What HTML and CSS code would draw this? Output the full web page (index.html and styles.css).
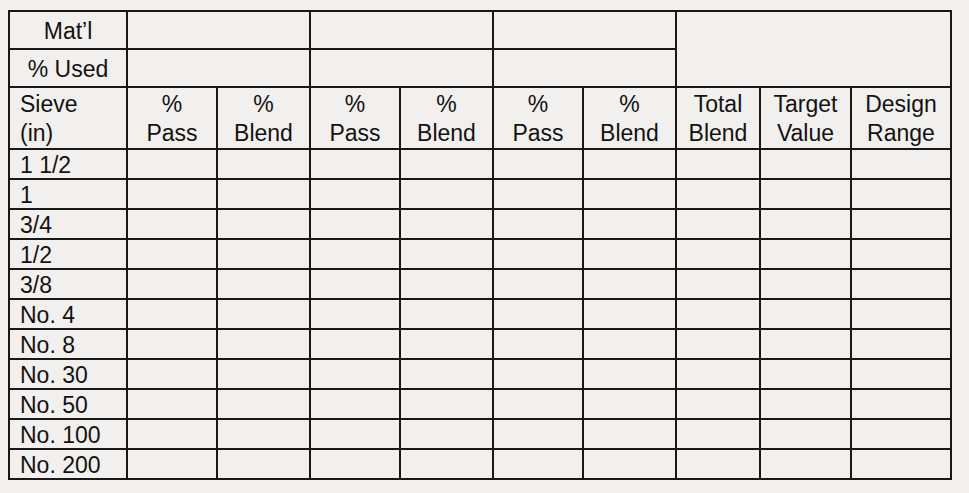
FILE: index.html
```html
<!DOCTYPE html>
<html lang="en">
<head>
<meta charset="utf-8">
<title>Aggregate Blend Worksheet</title>
<link rel="stylesheet" href="styles.css">
</head>
<body>
<div class="sheet">
  <div class="cell center">Mat’l</div>
  <div class="cell span2"></div>
  <div class="cell span2"></div>
  <div class="cell span2"></div>
  <div class="cell corner"></div>

  <div class="cell center">% Used</div>
  <div class="cell span2"></div>
  <div class="cell span2"></div>
  <div class="cell span2"></div>

  <div class="cell head left">Sieve<br>(in)</div>
  <div class="cell head">%<br>Pass</div>
  <div class="cell head">%<br>Blend</div>
  <div class="cell head">%<br>Pass</div>
  <div class="cell head">%<br>Blend</div>
  <div class="cell head">%<br>Pass</div>
  <div class="cell head">%<br>Blend</div>
  <div class="cell head">Total<br>Blend</div>
  <div class="cell head">Target<br>Value</div>
  <div class="cell head">Design<br>Range</div>

  <div class="cell label">1 1/2</div><div class="cell"></div><div class="cell"></div><div class="cell"></div><div class="cell"></div><div class="cell"></div><div class="cell"></div><div class="cell"></div><div class="cell"></div><div class="cell"></div>
  <div class="cell label">1</div><div class="cell"></div><div class="cell"></div><div class="cell"></div><div class="cell"></div><div class="cell"></div><div class="cell"></div><div class="cell"></div><div class="cell"></div><div class="cell"></div>
  <div class="cell label">3/4</div><div class="cell"></div><div class="cell"></div><div class="cell"></div><div class="cell"></div><div class="cell"></div><div class="cell"></div><div class="cell"></div><div class="cell"></div><div class="cell"></div>
  <div class="cell label">1/2</div><div class="cell"></div><div class="cell"></div><div class="cell"></div><div class="cell"></div><div class="cell"></div><div class="cell"></div><div class="cell"></div><div class="cell"></div><div class="cell"></div>
  <div class="cell label">3/8</div><div class="cell"></div><div class="cell"></div><div class="cell"></div><div class="cell"></div><div class="cell"></div><div class="cell"></div><div class="cell"></div><div class="cell"></div><div class="cell"></div>
  <div class="cell label">No. 4</div><div class="cell"></div><div class="cell"></div><div class="cell"></div><div class="cell"></div><div class="cell"></div><div class="cell"></div><div class="cell"></div><div class="cell"></div><div class="cell"></div>
  <div class="cell label">No. 8</div><div class="cell"></div><div class="cell"></div><div class="cell"></div><div class="cell"></div><div class="cell"></div><div class="cell"></div><div class="cell"></div><div class="cell"></div><div class="cell"></div>
  <div class="cell label">No. 30</div><div class="cell"></div><div class="cell"></div><div class="cell"></div><div class="cell"></div><div class="cell"></div><div class="cell"></div><div class="cell"></div><div class="cell"></div><div class="cell"></div>
  <div class="cell label">No. 50</div><div class="cell"></div><div class="cell"></div><div class="cell"></div><div class="cell"></div><div class="cell"></div><div class="cell"></div><div class="cell"></div><div class="cell"></div><div class="cell"></div>
  <div class="cell label">No. 100</div><div class="cell"></div><div class="cell"></div><div class="cell"></div><div class="cell"></div><div class="cell"></div><div class="cell"></div><div class="cell"></div><div class="cell"></div><div class="cell"></div>
  <div class="cell label">No. 200</div><div class="cell"></div><div class="cell"></div><div class="cell"></div><div class="cell"></div><div class="cell"></div><div class="cell"></div><div class="cell"></div><div class="cell"></div><div class="cell"></div>
</div>
</body>
</html>
```

FILE: styles.css
```css
html {
  background: #f1f0ee;
}

body {
  margin: 10px 0 0 8px;
  font-family: "Liberation Sans", Arial, sans-serif;
  font-size: 23px;
  color: #141211;
}

.sheet {
  display: grid;
  grid-template-columns: 118px 90px 93px 90px 93px 90px 93px 84px 91px 100px;
  grid-template-rows: 38px 38px 62px repeat(11, 30px);
  width: max-content;
  border-top: 2px solid #1a1817;
  border-left: 2px solid #1a1817;
}

.cell {
  box-sizing: border-box;
  border-right: 2px solid #1a1817;
  border-bottom: 2px solid #1a1817;
  display: flex;
  align-items: center;
  line-height: 28px;
}

.center {
  justify-content: center;
  padding-top: 2px;
}

.span2 {
  grid-column: span 2;
}

.corner {
  grid-column: span 3;
  grid-row: span 2;
}

.head {
  justify-content: center;
  text-align: center;
  line-height: 29px;
  padding-top: 1px;
}

.head.left {
  justify-content: flex-start;
  text-align: left;
  padding-left: 10px;
}

.label {
  padding-left: 10px;
  padding-top: 2px;
}
```
